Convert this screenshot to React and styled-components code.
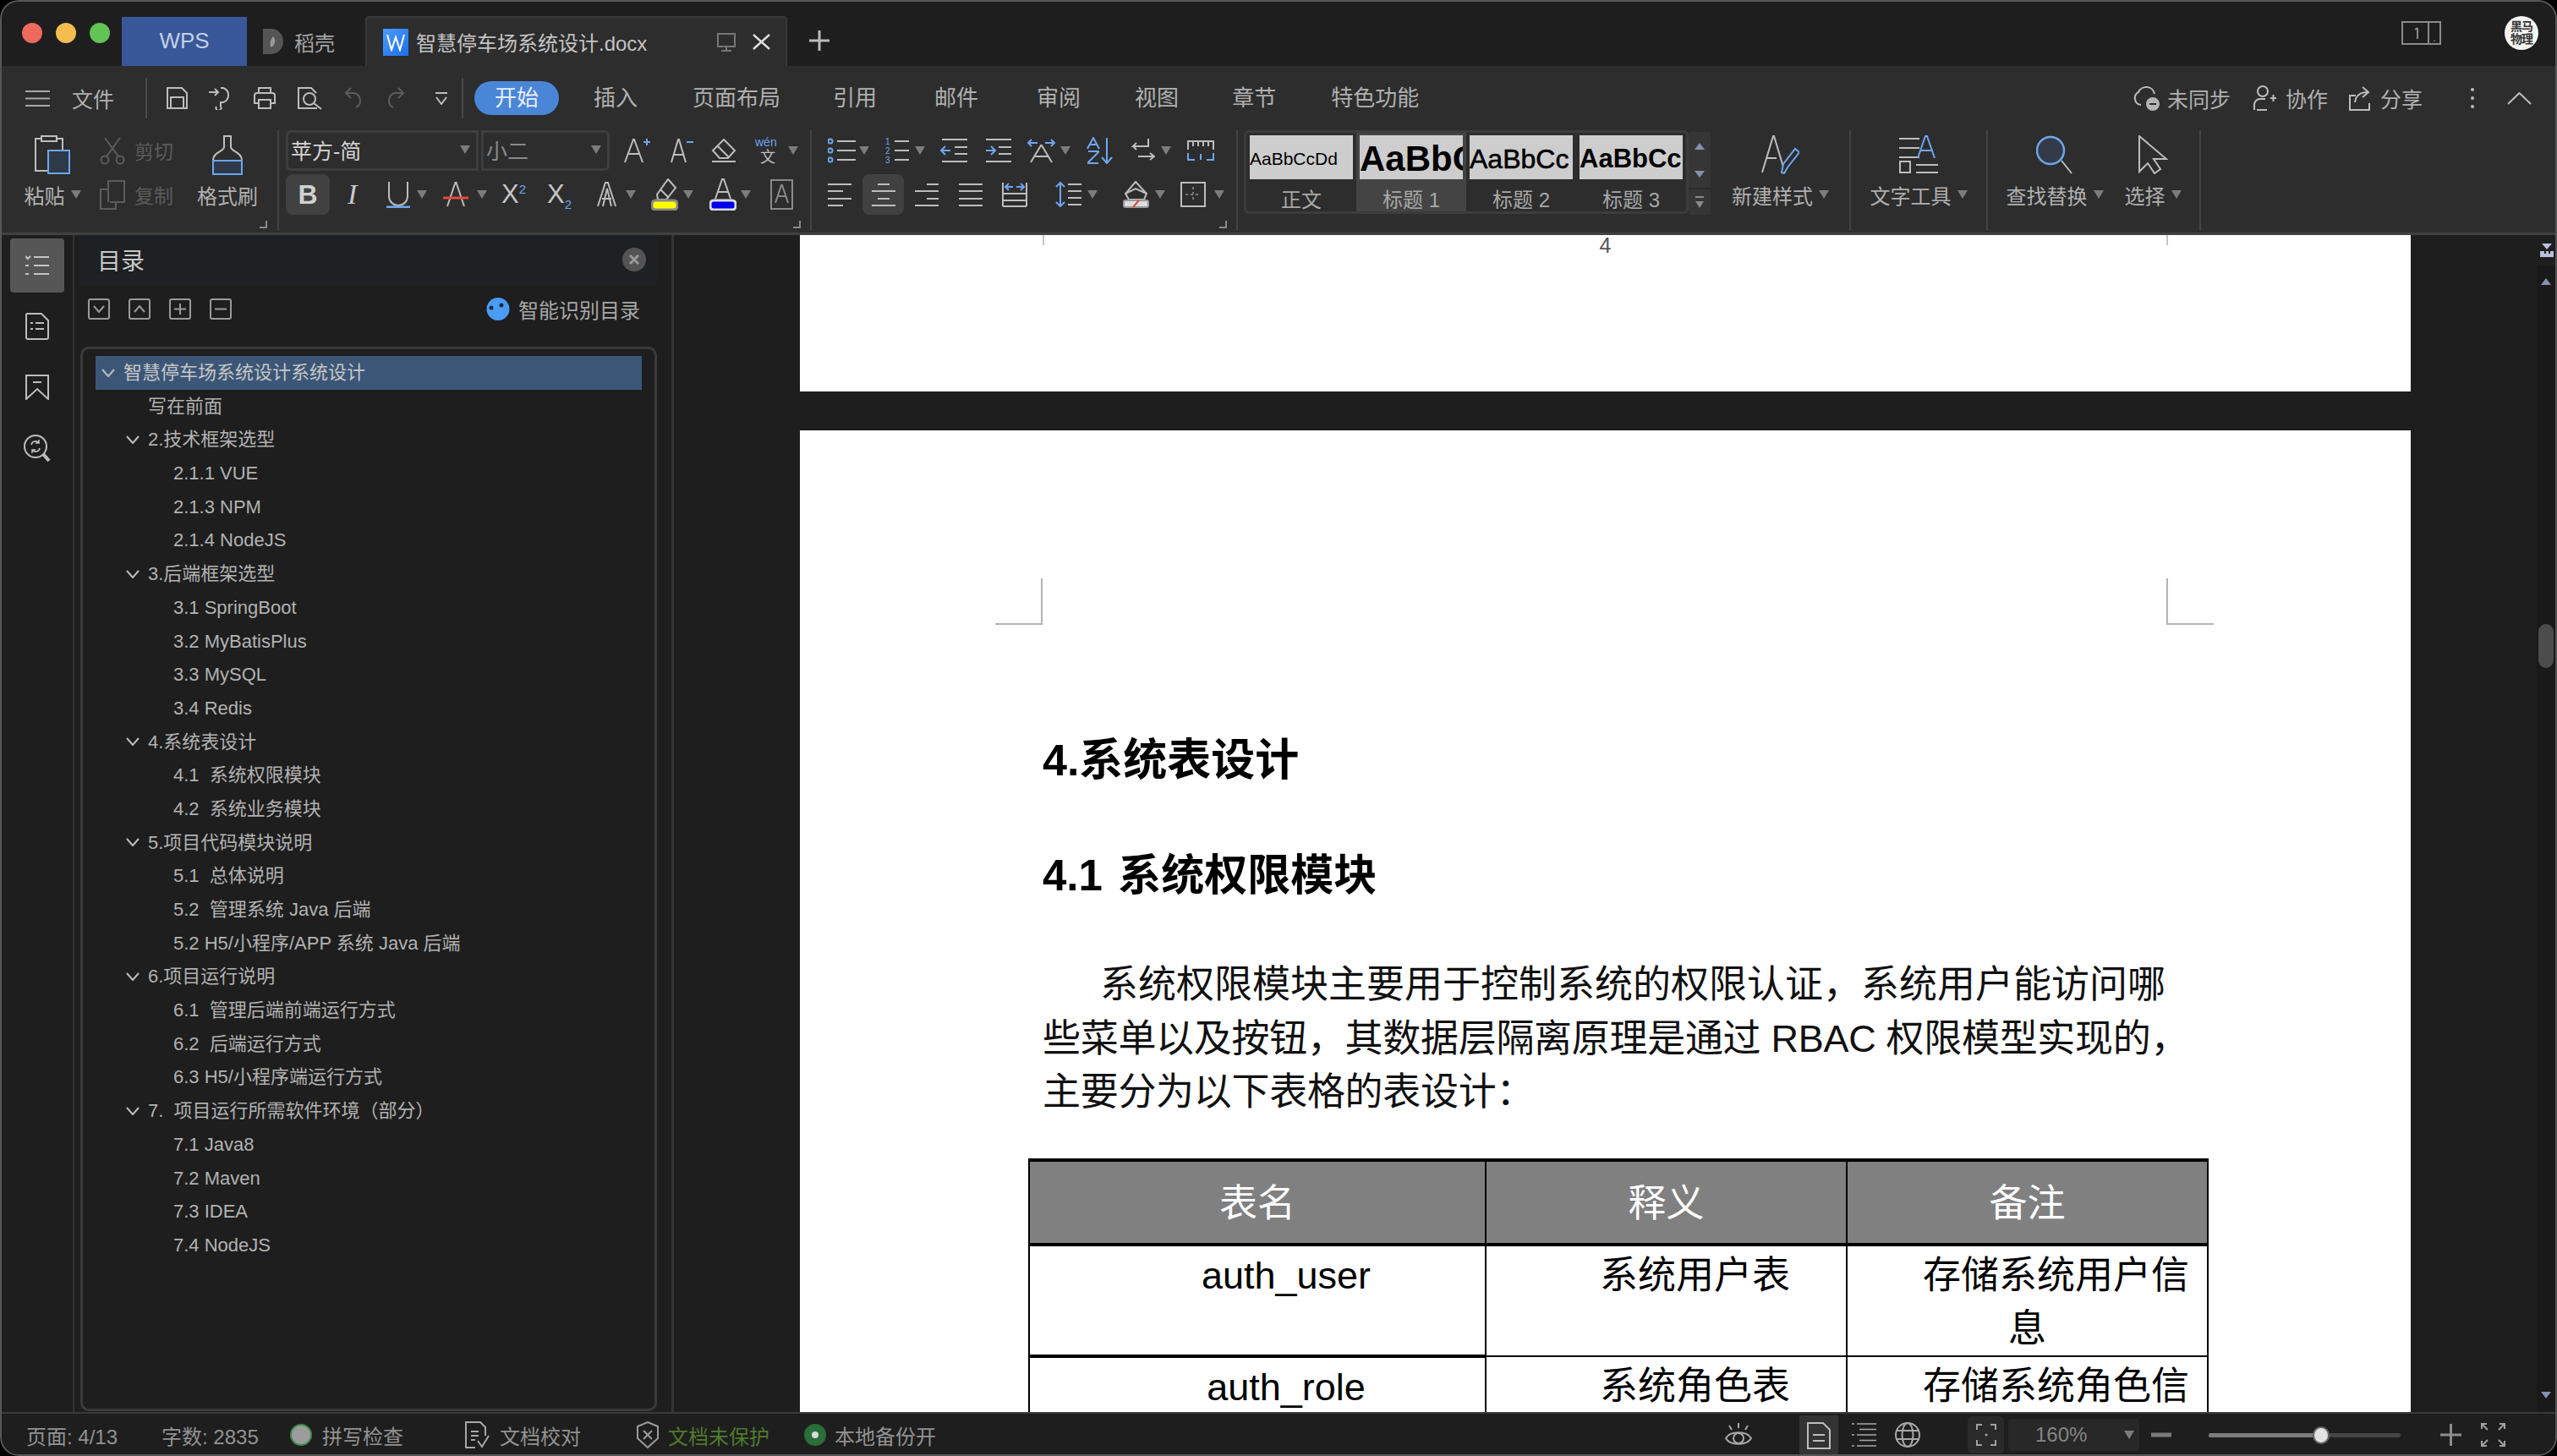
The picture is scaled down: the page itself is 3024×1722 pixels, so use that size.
import React from 'react';
import styled, { createGlobalStyle } from 'styled-components';

const GlobalStyle = createGlobalStyle`
  html, body { margin: 0; padding: 0; background: #000; }
  * { box-sizing: border-box; }
`;

const UI_FONT = `"Liberation Sans", "Noto Sans CJK SC", sans-serif`;
const DOC_FONT = `"Liberation Sans", "Noto Sans CJK SC", sans-serif`;
const BLUE = '#6ea6ee';
const DIM = '#5c5c5c';

const Window = styled.div`
  position: relative;
  width: 3024px;
  height: 1722px;
  display: flex;
  flex-direction: column;
  overflow: hidden;
  background: #1e1e1e;
  border-radius: 22px;
  font-family: ${UI_FONT};
  color: #b5b5b5;

  &::after {
    content: '';
    position: absolute;
    inset: 0;
    border: 2px solid #565656;
    border-radius: 22px;
    pointer-events: none;
  }
`;

/* --- generic drawing helper --- */
const Svg = styled.svg`
  flex: none;
  display: block;
  margin-left: ${p => p.$ml || 0}px;
  fill: none;
  stroke: ${p => p.$c || '#bdbdbd'};
  stroke-width: 2;
`;
const Ico = ({ w, h, ml, c, children }) => (
  <Svg width={w} height={h} viewBox={`0 0 ${w} ${h}`} $ml={ml} $c={c}>{children}</Svg>
);

/* --- title strip --- */
const TabStrip = styled.div`
  height: 78px;
  flex: none;
  display: flex;
  align-items: flex-end;
  padding-left: 26px;
  padding-right: 22px;
  background: #1e1e1e;
`;
const Lights = styled.div`
  align-self: stretch;
  display: flex;
  align-items: center;
  gap: 16px;
`;
const Light = styled.span`
  width: 24px;
  height: 24px;
  border-radius: 50%;
  background: ${p => p.$c};
`;
const WpsTab = styled.div`
  width: 148px;
  height: 58px;
  margin-left: 14px;
  display: flex;
  align-items: center;
  justify-content: center;
  background: #38589a;
  color: #c4cfe6;
  font-size: 26px;
  padding-bottom: 2px;
`;
const PlainTab = styled.div`
  width: 140px;
  height: 58px;
  padding-left: 19px;
  display: flex;
  align-items: center;
  gap: 13px;
  font-size: 24px;
  color: #a5a5a5;
`;
const DocTab = styled.div`
  width: 499px;
  height: 59px;
  padding: 0 18px 0 19px;
  display: flex;
  align-items: center;
  background: #2d2d2d;
  border: 2px solid #383838;
  border-bottom: none;
  border-radius: 4px 4px 0 0;
  font-size: 24px;
  color: #c4c4c4;
`;
const DocTabName = styled.span`
  margin-left: 9px;
  flex: 1;
  white-space: nowrap;
`;
const WordMark = styled.span`
  width: 30px;
  height: 32px;
  flex: none;
  display: flex;
  align-items: center;
  justify-content: center;
  background: linear-gradient(135deg, #4b9bff, #1f6fe8);
`;
const NewTab = styled.div`
  align-self: stretch;
  display: flex;
  align-items: center;
  padding-top: 18px;
`;
const StripRight = styled.div`
  margin-left: auto;
  align-self: stretch;
  display: flex;
  align-items: center;
`;
const Avatar = styled.div`
  width: 40px;
  height: 40px;
  margin-left: 75px;
  border-radius: 50%;
  background: #f4f4f4;
  color: #333;
  font-size: 14px;
  font-weight: 700;
  line-height: 15px;
  text-align: center;
  padding-top: 5px;
  overflow: hidden;
  letter-spacing: -1px;
`;

/* --- ribbon --- */
const Ribbon = styled.div`
  height: 200px;
  flex: none;
  display: flex;
  flex-direction: column;
  background: #2d2d2d;
  border-bottom: 3px solid #414141;
`;
const MenuRow = styled.div`
  height: 72px;
  flex: none;
  display: flex;
  align-items: center;
  padding: 4px 30px 0 30px;
  font-size: 25px;
`;
const MenuText = styled.span`
  margin-left: ${p => p.$ml || 0}px;
  color: #b0b0b0;
`;
const VSep = styled.span`
  width: 2px;
  height: 48px;
  margin-left: ${p => p.$ml}px;
  background: #4a4a4a;
`;
const MenuTabs = styled.div`
  display: flex;
  gap: 17px;
  margin-left: 13px;
`;
const MenuTab = styled.div`
  height: 40px;
  padding: 0 24px;
  margin-left: ${p => p.$ml || 0}px;
  line-height: 40px;
  font-size: 26px;
  border-radius: 20px;
  white-space: nowrap;
  color: ${p => (p.$active ? '#e8eef8' : '#b0b0b0')};
  background: ${p => (p.$active ? '#4a86d8' : 'transparent')};
`;
const MenuRight = styled.div`
  margin-left: auto;
  display: flex;
  align-items: center;
  font-size: 25px;
`;
const RibbonBody = styled.div`
  flex: 1;
  display: flex;
`;
const Group = styled.div`
  position: relative;
  flex: none;
  width: ${p => p.$w}px;
  display: flex;
  padding-left: ${p => p.$pl || 0}px;
  border-right: 2px solid #424242;
  margin-top: 4px;
  margin-bottom: 2px;
`;
const Launcher = styled.span`
  position: absolute;
  right: ${p => p.$r}px;
  top: 107px;
  width: 9px;
  height: 9px;
  border-right: 2px solid #8a8a8a;
  border-bottom: 2px solid #8a8a8a;
`;
const ToolStack = styled.div`
  display: flex;
  flex-direction: column;
  gap: 4px;
  margin-left: ${p => p.$ml || 0}px;
`;
const ToolRow = styled.div`
  height: 48px;
  display: flex;
  align-items: center;
`;
const LargeTool = styled.div`
  width: ${p => p.$w}px;
  margin-left: ${p => p.$ml || 0}px;
  flex: none;
  display: flex;
  flex-direction: column;
  align-items: center;
  padding-top: 6px;
`;
const LargeIcon = styled.div`
  height: 50px;
  display: flex;
  align-items: flex-start;
`;
const LargeLabel = styled.div`
  height: 40px;
  display: flex;
  align-items: center;
  gap: 7px;
  font-size: 24px;
  white-space: nowrap;
  color: #b0b0b0;
`;
const SmallLabel = styled.span`
  margin-left: 11px;
  font-size: 23px;
  color: ${DIM};
  white-space: nowrap;
`;
const Caret = styled.span`
  flex: none;
  width: 0;
  height: 0;
  margin-left: ${p => p.$ml || 0}px;
  border-left: 6px solid transparent;
  border-right: 6px solid transparent;
  border-top: 10px solid #7c7c7c;
`;
const FontBox = styled.div`
  width: ${p => p.$w}px;
  height: 48px;
  margin-left: ${p => p.$ml || 0}px;
  display: flex;
  align-items: center;
  justify-content: space-between;
  padding: 0 7px 3px 3px;
  border: 3px solid #3e3e3e;
  border-radius: ${p => p.$r};
  font-size: 25px;
  color: ${p => p.$c};
`;
const ActiveTool = styled.div`
  width: ${p => p.$w}px;
  height: 48px;
  margin-left: ${p => p.$ml || 0}px;
  display: flex;
  align-items: center;
  justify-content: center;
  background: #414141;
  border-radius: 8px;
`;
const BoldGlyph = styled.span`
  font-weight: 700;
  font-size: 32px;
  color: #d0d0d0;
`;
const ItalicGlyph = styled.span`
  margin-left: ${p => p.$ml}px;
  width: 15px;
  font-family: "Liberation Serif", serif;
  font-style: italic;
  font-size: 34px;
  color: #c8c8c8;
`;
const ScriptGlyph = styled.span`
  margin-left: ${p => p.$ml}px;
  width: ${p => p.$w}px;
  font-size: 31px;
  color: #c4c4c4;
  white-space: nowrap;

  sup, sub {
    font-size: 15px;
    color: ${BLUE};
    line-height: 0;
  }
`;

const Gallery = styled.div`
  width: 526px;
  height: 99px;
  margin-left: 6px;
  display: flex;
  flex: none;
  border: 3px solid #3c3c3c;
  border-radius: 6px;
`;
const StyleCol = styled.div`
  width: 130px;
  flex: none;
  padding: 3px 4px 0;
  background: ${p => (p.$hover ? '#444' : 'transparent')};
`;
const Swatch = styled.div`
  height: 52px;
  display: flex;
  align-items: center;
  overflow: hidden;
  background: #cdcdcd;
  color: #000;
  white-space: nowrap;
  font-size: ${p => p.$size}px;
  font-weight: ${p => p.$weight};
  -webkit-text-stroke: ${p => p.$stroke || 0}px #000;
  padding-top: 4px;
`;
const StyleName = styled.div`
  height: 38px;
  line-height: 50px;
  text-align: center;
  font-size: 24px;
  color: #a8a8a8;
`;
const GalleryBtns = styled.div`
  width: 26px;
  flex: none;
  display: flex;
  flex-direction: column;
  gap: 2px;
  margin-top: 2px;
`;
const GalleryBtn = styled.div`
  height: ${p => p.$h}px;
  display: flex;
  flex-direction: column;
  align-items: center;
  justify-content: space-around;
  background: #363636;
  border-radius: 3px;
`;

/* --- body --- */
const Main = styled.div`
  flex: 1;
  min-height: 0;
  display: flex;
  background: #1e1e1e;
`;
const Rail = styled.div`
  width: 88px;
  flex: none;
  padding: 4px 10px 0 12px;
  display: flex;
  flex-direction: column;
  gap: 8px;
  border-right: 2px solid #333;
`;
const RailBtn = styled.div`
  height: 64px;
  display: flex;
  align-items: center;
  justify-content: center;
  border-radius: 4px;
  background: ${p => (p.$active ? '#565656' : 'transparent')};
`;
const Panel = styled.div`
  width: 709px;
  flex: none;
  display: flex;
  flex-direction: column;
  border-right: 3px solid #333;
`;
const PanelHead = styled.div`
  height: 60px;
  flex: none;
  margin: 0 17px 0 5px;
  padding: 0 13px 3px 22px;
  display: flex;
  align-items: center;
  justify-content: space-between;
  background: #1e2023;
  font-size: 28px;
  color: #c8c8c8;
`;
const CloseDot = styled.span`
  width: 28px;
  height: 28px;
  display: flex;
  align-items: center;
  justify-content: center;
  border-radius: 50%;
  background: #545454;
`;
const PanelTools = styled.div`
  height: 54px;
  flex: none;
  padding: 0 37px 0 16px;
  display: flex;
  align-items: center;
  gap: 22px;
`;
const SmartLink = styled.div`
  margin-left: auto;
  display: flex;
  align-items: center;
  gap: 10px;
  font-size: 24px;
  color: #a8a8a8;
`;
const TreeBox = styled.div`
  margin: 18px 17px 1px 7px;
  flex: 1;
  padding: 8px 15px;
  border: 3px solid #3a3a3a;
  border-radius: 10px;
  overflow: hidden;
`;
const TreeRow = styled.div`
  height: 39.7px;
  line-height: 39.7px;
  display: flex;
  align-items: center;
  padding-left: ${p => p.$indent}px;
  font-size: 22px;
  white-space: pre;
  color: ${p => (p.$selected ? '#c6c6c6' : '#b2b2b2')};
  background: ${p => (p.$selected ? '#3c5678' : 'transparent')};
`;
const TreeSlot = styled.span`
  width: 26px;
  flex: none;
  display: flex;
  align-items: center;
`;

/* --- document --- */
const DocView = styled.div`
  flex: 1;
  min-width: 0;
  display: flex;
  flex-direction: column;
  align-items: center;
  overflow: hidden;
`;
const Page = styled.div`
  position: relative;
  width: 1905px;
  flex: none;
  background: #fff;
  color: #000;
  font-family: ${DOC_FONT};
`;
const PageTail = styled(Page)`
  height: 185px;
  margin-bottom: 46px;
`;
const PageFull = styled(Page)`
  padding: 360px 0 0 287px;
  height: 1400px;
`;
const PageNumber = styled.div`
  text-align: center;
  font-size: 25px;
  line-height: 24px;
  color: #555;
`;
const TailMark = styled.span`
  position: absolute;
  top: 0;
  left: ${p => p.$x}px;
  width: 2px;
  height: 12px;
  background: #c4c4c4;
`;
const CropMark = styled.span`
  position: absolute;
  top: 175px;
  width: 56px;
  height: 55px;
  ${p => (p.$right
    ? 'left: 1616px; border-left: 2px solid #b4b4b4; border-bottom: 2px solid #b4b4b4;'
    : 'left: 231px; border-right: 2px solid #b4b4b4; border-bottom: 2px solid #b4b4b4;')}
`;
const Heading = styled.div`
  font-size: ${p => p.$size}px;
  line-height: 60px;
  font-weight: 700;
  margin-top: ${p => p.$mt || 0}px;
  white-space: pre;
  word-spacing: ${p => p.$ws || 0}px;
`;
const Para = styled.div`
  margin-top: 67px;
  font-size: 45px;
  line-height: 63.6px;
  color: #111;
`;
const ParaLine = styled.div`
  white-space: nowrap;
  padding-left: ${p => p.$indent || 0}px;
  letter-spacing: ${p => p.$ls || 0}px;
`;
const Table = styled.table`
  margin: 46px 0 0 -17px;
  width: 1394px;
  table-layout: fixed;
  border-collapse: collapse;
  border-top: 4px solid #000;
  font-size: 45px;
  line-height: 63px;
`;
const Th = styled.th`
  height: 100px;
  background: #808080;
  color: #fff;
  font-weight: 400;
  text-align: center;
  padding: 3px 0 0;
  border: 2px solid #000;
  border-bottom: 4px solid #000;
`;
const Td = styled.td`
  padding: 3px 2px 0;
  text-align: center;
  text-indent: 68px;
  vertical-align: top;
  border: 2px solid #000;
  border-top-width: ${p => (p.$thick ? 4 : 2)}px;
`;
const Row1 = styled.tr`
  height: 128px;
`;

/* --- scroll column --- */
const ScrollCol = styled.div`
  width: 24px;
  flex: none;
  display: flex;
  flex-direction: column;
`;
const ScrollCap = styled.div`
  height: 36px;
  flex: none;
  padding: 10px 0 0 4px;
`;
const ScrollTrack = styled.div`
  flex: 1;
  display: flex;
  flex-direction: column;
  align-items: center;
  padding: 15px 2px 16px 0;
  background: #191919;
`;
const ScrollThumb = styled.div`
  width: 18px;
  height: 52px;
  margin-top: 401px;
  margin-bottom: auto;
  border-radius: 9px;
  background: #4c4c4c;
`;
const ArrowUp = styled.span`
  border-left: 6px solid transparent;
  border-right: 6px solid transparent;
  border-bottom: 8px solid #8791ad;
`;
const ArrowDown = styled.span`
  border-left: 6px solid transparent;
  border-right: 6px solid transparent;
  border-top: 8px solid #8791ad;
`;

/* --- status bar --- */
const StatusBar = styled.div`
  height: 52px;
  flex: none;
  display: flex;
  align-items: center;
  padding: 0 61px 0 31px;
  background: #1e1e1e;
  border-top: 2px solid #3a3a3a;
  font-size: 24px;
  color: #929292;
`;
const StatusCell = styled.div`
  width: ${p => p.$w}px;
  flex: none;
  display: flex;
  align-items: center;
  gap: ${p => p.$gap || 0}px;
  white-space: nowrap;
  color: ${p => p.$c || 'inherit'};
`;
const StatusRight = styled.div`
  margin-left: auto;
  align-self: stretch;
  display: flex;
  align-items: center;
`;
const ViewBtn = styled.div`
  width: ${p => p.$w}px;
  margin-left: ${p => p.$ml}px;
  flex: none;
  align-self: stretch;
  margin-top: 2px;
  display: flex;
  align-items: center;
  justify-content: center;
  background: #333;
`;
const FocusBtn = styled.div`
  width: 43px;
  height: 44px;
  margin-left: 56px;
  flex: none;
  display: flex;
  align-items: center;
  justify-content: center;
  border-radius: 6px;
  background: #2a2a2a;
`;
const ZoomBox = styled.div`
  width: 155px;
  height: 38px;
  margin-left: 5px;
  flex: none;
  display: flex;
  align-items: center;
  justify-content: space-between;
  padding: 0 6px 0 32px;
  border-radius: 4px;
  background: #282828;
  font-size: 24px;
  color: #858585;
`;
const SliderTrack = styled.div`
  position: relative;
  width: 227px;
  height: 5px;
  margin-left: 44px;
  flex: none;
  border-radius: 3px;
  background: #464646;
`;
const SliderFill = styled.div`
  width: 133px;
  height: 100%;
  border-radius: 3px;
  background: #7c7c7c;
`;
const SliderHandle = styled.span`
  position: absolute;
  left: 123px;
  top: -8px;
  width: 20px;
  height: 21px;
  border-radius: 50%;
  background: #e2e2e2;
  border: 2px solid #666;
`;

/* --- data --- */
const MENU_TABS = [
  ['插入', 0], ['页面布局', 0], ['引用', -3], ['邮件', 3], ['审阅', 4], ['视图', -1], ['章节', -2], ['特色功能', 0],
];

const TREE = [
  [7, 1, '智慧停车场系统设计系统设计', true],
  [36, 0, '写在前面'],
  [36, 1, '2.技术框架选型'],
  [66, 0, '2.1.1 VUE'],
  [66, 0, '2.1.3 NPM'],
  [66, 0, '2.1.4 NodeJS'],
  [36, 1, '3.后端框架选型'],
  [66, 0, '3.1 SpringBoot'],
  [66, 0, '3.2 MyBatisPlus'],
  [66, 0, '3.3 MySQL'],
  [66, 0, '3.4 Redis'],
  [36, 1, '4.系统表设计'],
  [66, 0, '4.1  系统权限模块'],
  [66, 0, '4.2  系统业务模块'],
  [36, 1, '5.项目代码模块说明'],
  [66, 0, '5.1  总体说明'],
  [66, 0, '5.2  管理系统 Java 后端'],
  [66, 0, '5.2 H5/小程序/APP 系统 Java 后端'],
  [36, 1, '6.项目运行说明'],
  [66, 0, '6.1  管理后端前端运行方式'],
  [66, 0, '6.2  后端运行方式'],
  [66, 0, '6.3 H5/小程序端运行方式'],
  [36, 1, '7.  项目运行所需软件环境（部分）'],
  [66, 0, '7.1 Java8'],
  [66, 0, '7.2 Maven'],
  [66, 0, '7.3 IDEA'],
  [66, 0, '7.4 NodeJS'],
];

const LETTER_A = 'M2 29L12 2h1l10 27M6 19h13';
const lines = (x1, x2, ys) => ys.map(y => `M${x1} ${y}H${x2}`).join('');

const TreeChevron = () => (
  <Ico w={16} h={10}><path d="M1 1l7 8 7-8" /></Ico>
);

const SmallBoxIcon = ({ d }) => (
  <Ico w={26} h={25} c="#9a9a9a">
    <rect x="1" y="1" width="24" height="23" rx="2" />
    <path d={d} />
  </Ico>
);

export default function App() {
  return (
    <Window>
      <GlobalStyle />
      <TabStrip>
        <Lights>
          <Light $c="#ee6a5f" />
          <Light $c="#f5bd4f" />
          <Light $c="#61c454" />
        </Lights>
        <WpsTab>WPS</WpsTab>
        <PlainTab>
          <Ico w={24} h={30} c="none">
            <path d="M0 0h10a14 15 0 0 1 0 30H0z" fill="#555" />
            <path d="M12 9c4 5 2 10-2 13-3-4-1-9 2-13z" fill="#999" />
          </Ico>
          稻壳
        </PlainTab>
        <DocTab>
          <WordMark>
            <Ico w={24} h={22} c="#fff"><path d="M2 2l5 18 5-15 5 15 5-18" /></Ico>
          </WordMark>
          <DocTabName>智慧停车场系统设计.docx</DocTabName>
          <Ico w={22} h={22} c="#777">
            <rect x="1" y="1" width="20" height="15" />
            <path d="M11 16v5M5 21h12" />
          </Ico>
          <Ico w={21} h={19} ml={20} c="#ddd"><path d="M1 1l19 17M20 1L1 18" strokeWidth="2.4" /></Ico>
        </DocTab>
        <NewTab>
          <Ico w={24} h={24} ml={26} c="#bbb"><path d="M12 0v24M0 12h24" strokeWidth="3" /></Ico>
        </NewTab>
        <StripRight>
          <Ico w={47} h={28} c="#8a8a8a">
            <path d="M33 1H1v26h32" />
            <rect x="32" y="1" width="14" height="26" />
            <path d="M19 8v13M16 10l3-2" />
            <path d="M39 23v1" />
          </Ico>
          <Avatar>黑马<br />物理</Avatar>
        </StripRight>
      </TabStrip>

      <Ribbon>
        <MenuRow>
          <Ico w={29} h={19} c="#a8a8a8"><path d={lines(0, 29, [1, 9.5, 18])} /></Ico>
          <MenuText $ml={26}>文件</MenuText>
          <VSep $ml={37} />
          <Ico w={28} h={26} ml={21}>
            <path d="M3 1h17l6 6v18H3z" /><path d="M7 12h15v13H7z" />
          </Ico>
          <Ico w={29} h={27} ml={23}>
            <path d="M1 6h10M8 2l4 4-4 4" />
            <path d="M15 1h3a9 9 0 0 1 0 17h-3v5a3 3 0 1 1-5 0" />
          </Ico>
          <Ico w={28} h={26} ml={24}>
            <path d="M7 7V1h14v6M7 19H2V10a3 3 0 0 1 3-3h18a3 3 0 0 1 3 3v9h-5" />
            <rect x="7" y="15" width="14" height="10" />
          </Ico>
          <Ico w={31} h={27} ml={24}>
            <path d="M24 25H2V1h15l6 6" />
            <circle cx="15" cy="14" r="7" />
            <path d="M20 19l9 7" />
          </Ico>
          <Ico w={22} h={26} ml={25} c={DIM}>
            <path d="M8 1L2 7l6 6M2 7h9a9 9 0 0 1 3 17" />
          </Ico>
          <Ico w={22} h={26} ml={28} c={DIM}>
            <path d="M14 1l6 6-6 6M20 7h-9a9 9 0 0 0-3 17" />
          </Ico>
          <Ico w={16} h={15} ml={35}>
            <path d="M1 1h14M2 6l6 8 6-8" />
          </Ico>
          <VSep $ml={16} />
          <MenuTabs>
            <MenuTab $active>开始</MenuTab>
            {MENU_TABS.map(([t, ml]) => (
              <MenuTab key={t} $ml={ml}>{t}</MenuTab>
            ))}
          </MenuTabs>
          <MenuRight>
            <Ico w={33} h={32}>
              <path d="M10 24a8 8 0 0 1-3-15 10 10 0 0 1 19 2" />
              <circle cx="24" cy="23" r="8" fill="#b5b5b5" stroke="none" />
              <path d="M20 23h8" stroke="#2d2d2d" />
            </Ico>
            <MenuText $ml={8}>未同步</MenuText>
            <Ico w={27} h={30} ml={27}>
              <circle cx="11" cy="7" r="6" />
              <path d="M1 29v-6a7 7 0 0 1 7-7h6M4 29h12M20 15h7M23.500 11v8" />
            </Ico>
            <MenuText $ml={11}>协作</MenuText>
            <Ico w={27} h={30} ml={24}>
              <path d="M9 12H2v17h23v-8" />
              <path d="M8 20c1-8 6-12 15-12M17 2l7 6-7 6" />
            </Ico>
            <MenuText $ml={11}>分享</MenuText>
            <Ico w={4} h={24} ml={57} c="none">
              <circle cx="2" cy="2" r="2" fill="#bbb" />
              <circle cx="2" cy="12" r="2" fill="#bbb" />
              <circle cx="2" cy="22" r="2" fill="#bbb" />
            </Ico>
            <Ico w={29} h={15} ml={39}><path d="M1 14L14.500 1 28 14" /></Ico>
          </MenuRight>
        </MenuRow>

        <RibbonBody>
          <Group $w={330} $pl={24}>
            <LargeTool $w={76}>
              <LargeIcon>
                <Ico w={42} h={47}>
                  <path d="M8 4H1v38h15M26 4h7v14" />
                  <rect x="8" y="1" width="18" height="6" />
                  <rect x="16" y="18" width="25" height="27" fill="#2e3a4a" stroke={BLUE} />
                </Ico>
              </LargeIcon>
              <LargeLabel>粘贴<Caret /></LargeLabel>
            </LargeTool>
            <ToolStack $ml={18}>
              <ToolRow>
                <Ico w={30} h={33} c={DIM}>
                  <circle cx="6" cy="27" r="4.500" /><circle cx="24" cy="27" r="4.500" />
                  <path d="M8 23L24 1M22 23L6 1" />
                </Ico>
                <SmallLabel>剪切</SmallLabel>
              </ToolRow>
              <ToolRow>
                <Ico w={30} h={35} c={DIM}>
                  <path d="M10 26V1h19v25H12" /><path d="M10 11H1v23h18v-8" />
                </Ico>
                <SmallLabel>复制</SmallLabel>
              </ToolRow>
            </ToolStack>
            <LargeTool $w={70} $ml={29}>
              <LargeIcon>
                <Ico w={36} h={47}>
                  <path d="M14 1h8v13c0 5 13 6 13 15v1H1v-1c0-9 13-10 13-15z" />
                  <rect x="1" y="30" width="34" height="16" fill="#2e3a4a" stroke={BLUE} />
                </Ico>
              </LargeIcon>
              <LargeLabel>格式刷</LargeLabel>
            </LargeTool>
            <Launcher $r={12} />
          </Group>

          <Group $w={630} $pl={8}>
            <ToolStack>
              <ToolRow>
                <FontBox $w={228} $r="6px 0 0 6px" $c="#d4d4d4">苹方-简<Caret /></FontBox>
                <FontBox $w={152} $ml={3} $r="0 6px 6px 0" $c="#8a8a8a">小二<Caret /></FontBox>
                <Ico w={32} h={30} ml={16}>
                  <path d={LETTER_A} /><path d="M24 5h8M28 1v8" stroke={BLUE} />
                </Ico>
                <Ico w={27} h={30} ml={24}>
                  <path d="M1 29L9 2h1l8 27M4 20h11" /><path d="M19 5h8" stroke={BLUE} />
                </Ico>
                <Ico w={30} h={28} ml={21}>
                  <path d="M15 1l13 13-8 9H10l-8-9zM8 9l13 13M1 27h28" />
                </Ico>
                <Ico w={32} h={32} ml={21} c="none">
                  <text x="1" y="11" fontSize="14" fill={BLUE} fontFamily={UI_FONT}>wén</text>
                  <text x="7" y="30" fontSize="18" fill="#c0c0c0" fontFamily={UI_FONT}>文</text>
                </Ico>
                <Caret $ml={8} />
              </ToolRow>
              <ToolRow>
                <ActiveTool $w={52}><BoldGlyph>B</BoldGlyph></ActiveTool>
                <ItalicGlyph $ml={21}>I</ItalicGlyph>
                <Ico w={28} h={32} ml={31}>
                  <path d="M3 1v17a11 11 0 0 0 22 0V1" />
                  <path d="M0 31h28" stroke={BLUE} strokeWidth="3" />
                </Ico>
                <Caret $ml={8} />
                <Ico w={30} h={30} ml={19}>
                  <path d="M5 29L14.500 1h1L25 29" /><path d="M0 19h30" stroke="#e5483e" strokeWidth="3" />
                </Ico>
                <Caret $ml={10} />
                <ScriptGlyph $ml={17} $w={34}>X<sup>2</sup></ScriptGlyph>
                <ScriptGlyph $ml={20} $w={33}>X<sub>2</sub></ScriptGlyph>
                <Ico w={25} h={30} ml={25}>
                  <path d="M2 29L11 1h3l9 28M7 20h11M8 29L13 8l5 21" />
                </Ico>
                <Caret $ml={10} />
                <Ico w={32} h={38} ml={18}>
                  <path d="M20 1l9 10-11 14H8l-1-6z" />
                  <path d="M11 13l10 10" />
                  <rect x="1" y="26" width="30" height="11" rx="4" fill="#ffff00" stroke="#888" strokeWidth="3" />
                </Ico>
                <Caret $ml={6} />
                <Ico w={32} h={38} ml={19}>
                  <path d="M7 24L15 1h2l8 23M10 16h12" />
                  <rect x="1" y="26" width="30" height="11" rx="4" fill="#0000ee" stroke="#ddd" strokeWidth="3" />
                </Ico>
                <Caret $ml={5} />
                <Ico w={27} h={36} ml={23} c="#8a8a8a">
                  <rect x="1" y="1" width="25" height="34" />
                  <path d="M6 28L13 7h1l7 21M9 20h9" />
                </Ico>
              </ToolRow>
            </ToolStack>
            <Launcher $r={11} />
          </Group>

          <Group $w={504} $pl={19}>
            <ToolStack>
              <ToolRow>
                <Ico w={33} h={30}>
                  <path d={lines(11, 33, [4, 15, 26])} />
                  <circle cx="3" cy="4" r="2.500" stroke={BLUE} />
                  <circle cx="3" cy="15" r="2.500" stroke={BLUE} />
                  <circle cx="3" cy="26" r="2.500" stroke={BLUE} />
                </Ico>
                <Caret $ml={4} />
                <Ico w={29} h={32} ml={18} c="none">
                  <path d={lines(12, 29, [5, 16, 27])} stroke="#bdbdbd" />
                  <text x="1" y="9" fontSize="10" fill={BLUE} fontFamily={UI_FONT}>1</text>
                  <text x="1" y="20" fontSize="10" fill={BLUE} fontFamily={UI_FONT}>2</text>
                  <text x="1" y="31" fontSize="10" fill={BLUE} fontFamily={UI_FONT}>3</text>
                </Ico>
                <Caret $ml={7} />
                <Ico w={32} h={28} ml={18}>
                  <path d={lines(2, 32, [1, 27]) + lines(17, 32, [10, 18])} />
                  <path d="M12 14H1M6 9l-5 5 5 5" stroke={BLUE} />
                </Ico>
                <Ico w={31} h={28} ml={21}>
                  <path d={lines(1, 31, [1, 27]) + lines(16, 31, [10, 18])} />
                  <path d="M1 14h11M7 9l5 5-5 5" stroke={BLUE} />
                </Ico>
                <Ico w={33} h={30} ml={19}>
                  <path d="M4 29L16 9h1l12 20M9 22h15" />
                  <path d="M1 6h11M5 2L1 6l4 4M21 6h11M28 2l4 4-4 4" stroke={BLUE} />
                </Ico>
                <Caret $ml={6} />
                <Ico w={32} h={32} ml={19} c={BLUE}>
                  <path d="M1 14L8 1l7 13M4 9h8M2 17h12v1L2 30v1h12M24 1v29M18 24l6 7 6-7" />
                </Ico>
                <Ico w={28} h={30} ml={21}>
                  <path d="M20 1v9H2l4-4M2 10l4 4M8 22h19l-5-4M27 22l-5 4" />
                </Ico>
                <Caret $ml={7} />
                <Ico w={32} h={24} ml={19}>
                  <path d="M1 11V1h30v10M7 1v6M13 1v6M19 1v6M25 1v6" />
                  <path d="M1 15v8h8M31 15v8h-8M16 16v7" stroke={BLUE} />
                </Ico>
              </ToolRow>
              <ToolRow>
                <Ico w={28} h={28}><path d={lines(0, 28, [2, 19]) + lines(0, 18, [10, 27])} /></Ico>
                <ActiveTool $w={49} $ml={13}>
                  <Ico w={28} h={28}><path d={lines(0, 28, [10, 27]) + lines(7, 21, [2, 19])} /></Ico>
                </ActiveTool>
                <Ico w={28} h={28} ml={13}><path d={lines(0, 28, [27, 10]) + lines(14, 28, [2, 19])} /></Ico>
                <Ico w={28} h={28} ml={24}><path d={lines(0, 28, [2, 10, 19, 27])} /></Ico>
                <Ico w={30} h={30} ml={23}>
                  <path d="M1 1v28M29 1v28M1 14h28M1 22h28M1 29h28" />
                  <path d="M3 6h10M8 2L4 6l4 4M17 6h10M22 2l4 4-4 4" stroke={BLUE} />
                </Ico>
                <Ico w={31} h={30} ml={33}>
                  <path d={lines(15, 31, [3, 11, 19, 27])} />
                  <path d="M6 1v28M1 6l5-5 5 5M1 24l5 5 5-5" stroke={BLUE} />
                </Ico>
                <Caret $ml={7} />
                <Ico w={31} h={32} ml={30}>
                  <path d="M15 1L28 15l-3 7H7L3 15z" />
                  <path d="M3 15l12-6 13 6" />
                  <rect x="1" y="23" width="29" height="8" rx="2" fill="#ddd" stroke="#999" />
                  <path d="M12 31l7-8" stroke="#e5483e" />
                </Ico>
                <Caret $ml={7} />
                <Ico w={30} h={30} ml={18}>
                  <rect x="1" y="1" width="28" height="28" />
                  <path d="M15 6v18M6 15h18" strokeDasharray="3 3" stroke="#777" />
                </Ico>
                <Caret $ml={10} />
              </ToolRow>
            </ToolStack>
            <Launcher $r={11} />
          </Group>

          <Group $w={725} $pl={1}>
            <Gallery>
              <StyleCol>
                <Swatch $size={21} $weight={400}>AaBbCcDd</Swatch>
                <StyleName>正文</StyleName>
              </StyleCol>
              <StyleCol $hover>
                <Swatch $size={42} $weight={700}>AaBbCc</Swatch>
                <StyleName>标题 1</StyleName>
              </StyleCol>
              <StyleCol>
                <Swatch $size={32} $weight={400} $stroke={0.6}>AaBbCc</Swatch>
                <StyleName>标题 2</StyleName>
              </StyleCol>
              <StyleCol>
                <Swatch $size={31} $weight={700}>AaBbCc</Swatch>
                <StyleName>标题 3</StyleName>
              </StyleCol>
            </Gallery>
            <GalleryBtns>
              <GalleryBtn $h={66}>
                <ArrowUp />
                <ArrowDown />
              </GalleryBtn>
              <GalleryBtn $h={30}>
                <Ico w={12} h={16} c="#8a8a8a">
                  <path d="M1 2h10" />
                  <path d="M1 7h10L6 15z" fill="#8a8a8a" stroke="none" />
                </Ico>
              </GalleryBtn>
            </GalleryBtns>
            <LargeTool $w={125} $ml={20}>
              <LargeIcon>
                <Ico w={45} h={46}>
                  <path d="M1 44L14 1h1l13 43M7 27h11" />
                  <path d="M24 44l2-10 14-18 5 4-14 18-4 7z" fill="#2d2d2d" stroke={BLUE} />
                </Ico>
              </LargeIcon>
              <LargeLabel>新建样式<Caret /></LargeLabel>
            </LargeTool>
          </Group>

          <Group $w={162} $pl={19}>
            <LargeTool $w={122}>
              <LargeIcon>
                <Ico w={46} h={46}>
                  <path d={lines(0, 24, [4, 15, 26]) + lines(20, 46, [35, 44])} />
                  <rect x="1" y="31" width="12" height="13" />
                  <path d="M22 27L31 1h2l9 26M25 18h15" stroke={BLUE} />
                </Ico>
              </LargeIcon>
              <LargeLabel>文字工具<Caret /></LargeLabel>
            </LargeTool>
          </Group>

          <Group $w={252} $pl={20}>
            <LargeTool $w={118}>
              <LargeIcon>
                <Ico w={44} h={46}>
                  <circle cx="17" cy="18" r="16" fill="#333b49" stroke={BLUE} strokeWidth="2.500" />
                  <path d="M30 30l12 15" />
                </Ico>
              </LargeIcon>
              <LargeLabel>查找替换<Caret /></LargeLabel>
            </LargeTool>
            <LargeTool $w={70} $ml={22}>
              <LargeIcon>
                <Ico w={35} h={46}>
                  <path d="M1 1v42l10-10 8 12 7-5-8-12h15z" />
                </Ico>
              </LargeIcon>
              <LargeLabel>选择<Caret /></LargeLabel>
            </LargeTool>
          </Group>
        </RibbonBody>
      </Ribbon>

      <Main>
        <Rail>
          <RailBtn $active>
            <Ico w={28} h={24} c="#c4c4c4">
              <path d={lines(10, 28, [2, 12, 22]) + lines(0, 4, [12, 22])} />
              <path d="M0 1l3 3 3-3" />
            </Ico>
          </RailBtn>
          <RailBtn>
            <Ico w={28} h={32}>
              <path d="M2 1h17l8 8v20a2 2 0 0 1-2 2H3a2 2 0 0 1-2-2V2z" />
              <path d={lines(6, 9, [12, 19]) + lines(12, 22, [12, 19])} />
            </Ico>
          </RailBtn>
          <RailBtn>
            <Ico w={28} h={30}>
              <path d="M1 1h26v28L14 17 1 29zM9 9h10" />
            </Ico>
          </RailBtn>
          <RailBtn>
            <Ico w={32} h={32}>
              <circle cx="14" cy="14" r="13" />
              <path d="M9 12a5 5 0 0 1 9-2M19 16a5 5 0 0 1-9 2M18 6v4h-4M10 22v-4h4" strokeWidth="1.600" />
              <path d="M23 23l7 8" strokeWidth="4" />
            </Ico>
          </RailBtn>
        </Rail>

        <Panel>
          <PanelHead>
            目录
            <CloseDot>
              <Ico w={12} h={12} c="#999"><path d="M1 1l10 10M11 1L1 11" strokeWidth="3" /></Ico>
            </CloseDot>
          </PanelHead>
          <PanelTools>
            <SmallBoxIcon d="M7 9l6 7 6-7" />
            <SmallBoxIcon d="M7 16l6-7 6 7" />
            <SmallBoxIcon d="M13 6v13M6 12.500h14" />
            <SmallBoxIcon d="M6 12.500h14" />
            <SmartLink>
              <Ico w={28} h={27} c="none">
                <circle cx="14" cy="13.500" r="13.500" fill="#4a9bf5" />
                <circle cx="6" cy="12" r="2.500" fill="#1b2c44" />
                <circle cx="18" cy="9" r="2.500" fill="#1b2c44" />
              </Ico>
              智能识别目录
            </SmartLink>
          </PanelTools>
          <TreeBox>
            {TREE.map(([indent, fold, text, selected]) => (
              <TreeRow key={text} $indent={indent} $selected={selected}>
                <TreeSlot>{fold ? <TreeChevron /> : null}</TreeSlot>
                {text}
              </TreeRow>
            ))}
          </TreeBox>
        </Panel>

        <DocView>
          <PageTail>
            <TailMark $x={287} />
            <TailMark $x={1616} />
            <PageNumber>4</PageNumber>
          </PageTail>
          <PageFull>
            <CropMark />
            <CropMark $right />
            <Heading $size={52}>4.系统表设计</Heading>
            <Heading $size={51} $mt={77} $ws={-5}>{'4.1  系统权限模块'}</Heading>
            <Para>
              <ParaLine $indent={68}>系统权限模块主要用于控制系统的权限认证，系统用户能访问哪</ParaLine>
              <ParaLine $ls={-0.3}>些菜单以及按钮，其数据层隔离原理是通过 RBAC 权限模型实现的，</ParaLine>
              <ParaLine $ls={-0.3}>主要分为以下表格的表设计：</ParaLine>
            </Para>
            <Table>
              <colgroup>
                <col width="540" />
                <col width="427" />
                <col width="427" />
              </colgroup>
              <thead>
                <tr>
                  <Th>表名</Th>
                  <Th>释义</Th>
                  <Th>备注</Th>
                </tr>
              </thead>
              <tbody>
                <Row1>
                  <Td>auth_user</Td>
                  <Td>系统用户表</Td>
                  <Td>存储系统用户信息</Td>
                </Row1>
                <Row1>
                  <Td $thick>auth_role</Td>
                  <Td>系统角色表</Td>
                  <Td>存储系统角色信息</Td>
                </Row1>
              </tbody>
            </Table>
          </PageFull>
        </DocView>

        <ScrollCol>
          <ScrollCap>
            <Ico w={16} h={16} c="none">
              <path d="M2 0h12L8 7z" fill="#b9c0d6" />
              <path d="M0 9h5v3h2V9h3v3h2V9h4v7H0z" fill="#b9c0d6" />
            </Ico>
          </ScrollCap>
          <ScrollTrack>
            <ArrowUp />
            <ScrollThumb />
            <ArrowDown />
          </ScrollTrack>
        </ScrollCol>
      </Main>

      <StatusBar>
        <StatusCell $w={160}>页面: 4/13</StatusCell>
        <StatusCell $w={152}>字数: 2835</StatusCell>
        <StatusCell $w={206} $gap={12}>
          <Ico w={26} h={26} c="#3f8a4a"><circle cx="13" cy="13" r="12" fill="#9c9c9c" /></Ico>
          拼写检查
        </StatusCell>
        <StatusCell $w={203} $gap={11}>
          <Ico w={31} h={32} c="#a8a8a8">
            <path d="M13 31H2V1h17l6 6v10" />
            <path d="M8 12h9M8 17h9M8 22h5" />
            <path d="M16 23l5 7 8-13" />
          </Ico>
          文档校对
        </StatusCell>
        <StatusCell $w={199} $gap={10} $c="#4f7a2b">
          <Ico w={28} h={32} c="#9a9a9a">
            <path d="M14 1l12 5v14l-12 11L2 20V6z" />
            <path d="M9 11l10 10M19 11L9 21" />
          </Ico>
          文档未保护
        </StatusCell>
        <StatusCell $w={156} $gap={10}>
          <Ico w={26} h={26} c="none">
            <circle cx="13" cy="13" r="13" fill="#2a6e3a" />
            <circle cx="13" cy="13" r="4" fill="#d8d8d8" />
          </Ico>
          本地备份开
        </StatusCell>
        <StatusRight>
          <Ico w={32} h={30} c="#a8a8a8">
            <path d="M1 19c5-9 25-9 30 0-5 9-25 9-30 0z" />
            <circle cx="16" cy="19" r="6" />
            <path d="M16 1v6M5 4l3 5M27 4l-3 5" />
          </Ico>
          <ViewBtn $w={46} $ml={56}>
            <Ico w={28} h={32}>
              <path d="M1 1h18l8 8v22H1z" />
              <path d="M7 15h14M7 22h14" />
            </Ico>
          </ViewBtn>
          <Ico w={29} h={30} ml={16} c="#a8a8a8">
            <path d={lines(6, 29, [2, 15, 28]) + lines(0, 3, [2, 15, 28]) + lines(9, 29, [8.500, 21.500])} strokeWidth="1.500" />
          </Ico>
          <Ico w={30} h={30} ml={22} c="#a8a8a8">
            <circle cx="15" cy="15" r="14" />
            <ellipse cx="15" cy="15" rx="6.500" ry="14" />
            <path d="M1 10h28M1 20h28" />
          </Ico>
          <FocusBtn>
            <Ico w={24} h={26} c="#a0a0a0">
              <path d="M1 7V1h6M17 1h6v6M23 19v6h-6M7 25H1v-6" />
              <circle cx="12" cy="13" r="1.500" fill="#a0a0a0" stroke="none" />
            </Ico>
          </FocusBtn>
          <ZoomBox>160%<Caret /></ZoomBox>
          <Ico w={24} h={6} ml={14} c="#7c7c7c"><path d="M0 3h24" strokeWidth="5" /></Ico>
          <SliderTrack>
            <SliderFill />
            <SliderHandle />
          </SliderTrack>
          <Ico w={25} h={26} ml={47} c="#8c8c8c"><path d="M12.500 0v26M0 13h25" strokeWidth="3" /></Ico>
          <Ico w={29} h={28} ml={23} c="#a0a0a0">
            <path d="M1 7V1h6M1 1l7 7M28 7V1h-6M28 1l-7 7M1 21v6h6M1 27l7-7M28 21v6h-6M28 27l-7-7" />
          </Ico>
        </StatusRight>
      </StatusBar>
    </Window>
  );
}
